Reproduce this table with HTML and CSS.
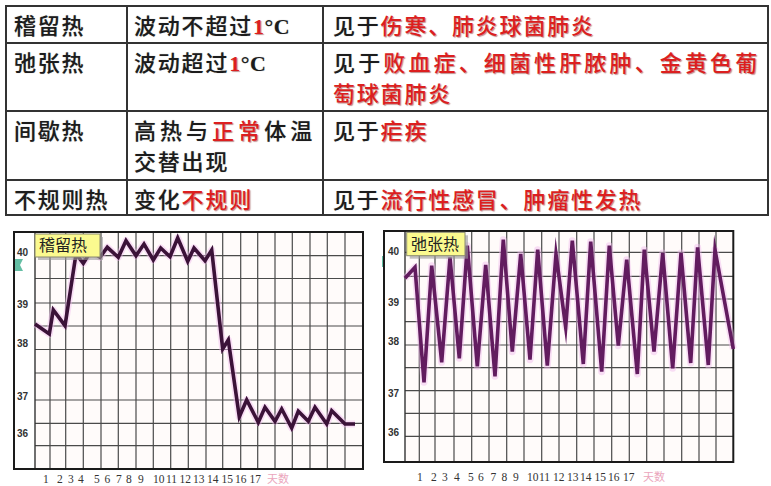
FILE: index.html
```html
<!DOCTYPE html>
<html lang="zh-CN">
  <head>
    <meta charset="UTF-8" />
    <meta name="viewport" content="width=device-width, initial-scale=1.0" />
    <link rel="stylesheet" href="styles.css">
    <title>热型</title>
  </head>
  <body>
    <table class="fever">
      <colgroup>
        <col class="c-name">
        <col class="c-range">
        <col class="c-seen">
      </colgroup>
      <tr class="r1">
        <td class="name">稽留热</td>
        <td class="range">波动不超过<span class="num"><b class="red">1</b>°C</span></td>
        <td class="seen">见于<span class="red">伤寒、肺炎球菌肺炎</span></td>
      </tr>
      <tr class="r2">
        <td class="name">弛张热</td>
        <td class="range">波动超过<span class="num"><b class="red">1</b>°C</span></td>
        <td class="seen">见于<span class="red">败血症、细菌性肝脓肿、金黄色葡萄球菌肺炎</span></td>
      </tr>
      <tr class="r3">
        <td class="name">间歇热</td>
        <td class="range">高热与<span class="red">正常</span>体温交替出现</td>
        <td class="seen">见于<span class="red">疟疾</span></td>
      </tr>
      <tr class="r4">
        <td class="name">不规则热</td>
        <td class="range">变化<span class="red">不规则</span></td>
        <td class="seen">见于<span class="red">流行性感冒、肿瘤性发热</span></td>
      </tr>
    </table>

    <div class="charts">
      <!-- 稽留热 -->
      <svg class="chart left" width="380" height="271" viewBox="0 0 380 271">
        <polygon class="tab" points="13,40 23,40 20,46 23,52 13,52" />
        <rect class="plot" x="35" y="13" width="328" height="237" />
        <g class="grid">
          <line x1="50" y1="13" x2="50" y2="250" />
          <line x1="65.7" y1="13" x2="65.7" y2="250" />
          <line x1="83.3" y1="13" x2="83.3" y2="250" />
          <line x1="101" y1="13" x2="101" y2="250" />
          <line x1="118.3" y1="13" x2="118.3" y2="250" />
          <line x1="136" y1="13" x2="136" y2="250" />
          <line x1="153.3" y1="13" x2="153.3" y2="250" />
          <line x1="170.7" y1="13" x2="170.7" y2="250" />
          <line x1="188.3" y1="13" x2="188.3" y2="250" />
          <line x1="206" y1="13" x2="206" y2="250" />
          <line x1="222.7" y1="13" x2="222.7" y2="250" />
          <line x1="240.7" y1="13" x2="240.7" y2="250" />
          <line x1="257.7" y1="13" x2="257.7" y2="250" />
          <line x1="275" y1="13" x2="275" y2="250" />
          <line x1="292.3" y1="13" x2="292.3" y2="250" />
          <line x1="310" y1="13" x2="310" y2="250" />
          <line x1="327.3" y1="13" x2="327.3" y2="250" />
          <line x1="345" y1="13" x2="345" y2="250" />
          <line x1="35" y1="36.7" x2="363" y2="36.7" />
          <line x1="35" y1="59.5" x2="363" y2="59.5" />
          <line x1="35" y1="84" x2="363" y2="84" />
          <line x1="35" y1="107" x2="363" y2="107" />
          <line x1="35" y1="130.5" x2="363" y2="130.5" />
          <line x1="35" y1="154" x2="363" y2="154" />
          <line x1="35" y1="181" x2="363" y2="181" />
          <line x1="35" y1="204.3" x2="363" y2="204.3" />
          <line x1="35" y1="226.7" x2="363" y2="226.7" />
        </g>
        <line class="axis" x1="35" y1="13" x2="35" y2="250" />
        <rect class="frame" x="14" y="13" width="349" height="237" />
        <g class="ylabels">
          <text x="17" y="37">40</text>
          <text x="17" y="89">39</text>
          <text x="17" y="128">38</text>
          <text x="17" y="181">37</text>
          <text x="17" y="218">36</text>
        </g>
        <polyline class="glow" points="35,105 49.3,115 53.3,91 65,106.7 76,35 83.3,44.3 91,32 100,38.3 107.3,28.3 118.3,38.3 126,21.7 136,36.7 144,25 153.3,41 160.7,29 170,37.7 177.7,19 187.7,42.3 194,29 205,41.7 211.7,31 222.7,130 228.3,121 239.3,197.7 246.7,181 258.3,203.3 265,188.3 275,202.3 281.7,190 291.7,209 298.3,192.3 308.3,202.3 315,188.3 326.7,205 331.7,191.7 345,205 355,205" />
        <polyline class="temp" points="35,105 49.3,115 53.3,91 65,106.7 76,35 83.3,44.3 91,32 100,38.3 107.3,28.3 118.3,38.3 126,21.7 136,36.7 144,25 153.3,41 160.7,29 170,37.7 177.7,19 187.7,42.3 194,29 205,41.7 211.7,31 222.7,130 228.3,121 239.3,197.7 246.7,181 258.3,203.3 265,188.3 275,202.3 281.7,190 291.7,209 298.3,192.3 308.3,202.3 315,188.3 326.7,205 331.7,191.7 345,205 355,205" />
        <rect class="tag-shadow" x="38" y="18" width="65" height="23" />
        <rect class="tag" x="35" y="15" width="65" height="23" />
        <text class="tag-text" x="39" y="32">稽留热</text>
        <g class="xlabels">
          <text x="43" y="264">1</text>
          <text x="57" y="264">2</text>
          <text x="68" y="264">3</text>
          <text x="78" y="264">4</text>
          <text x="94" y="264">5</text>
          <text x="104.5" y="264">6</text>
          <text x="116" y="264">7</text>
          <text x="126" y="264">8</text>
          <text x="138" y="264">9</text>
          <text x="153" y="264">10</text>
          <text x="166" y="264">11</text>
          <text x="179.5" y="264">12</text>
          <text x="193" y="264">13</text>
          <text x="207" y="264">14</text>
          <text x="221.5" y="264">15</text>
          <text x="235" y="264">16</text>
          <text x="249.5" y="264">17</text>
          <text class="days" x="267" y="264">天数</text>
        </g>
      </svg>

      <!-- 弛张热 -->
      <svg class="chart right" width="391" height="271" viewBox="0 0 391 271">
        <polygon class="tab" points="2,37 4,37 4,48 2,48" />
        <rect class="plot" x="25" y="12" width="328.3" height="231" />
        <g class="grid">
          <line x1="39.3" y1="12" x2="39.3" y2="243" />
          <line x1="55" y1="12" x2="55" y2="243" />
          <line x1="74" y1="12" x2="74" y2="243" />
          <line x1="91.7" y1="12" x2="91.7" y2="243" />
          <line x1="109" y1="12" x2="109" y2="243" />
          <line x1="126.7" y1="12" x2="126.7" y2="243" />
          <line x1="144" y1="12" x2="144" y2="243" />
          <line x1="161.7" y1="12" x2="161.7" y2="243" />
          <line x1="179" y1="12" x2="179" y2="243" />
          <line x1="196.7" y1="12" x2="196.7" y2="243" />
          <line x1="214" y1="12" x2="214" y2="243" />
          <line x1="231.7" y1="12" x2="231.7" y2="243" />
          <line x1="249.3" y1="12" x2="249.3" y2="243" />
          <line x1="266.7" y1="12" x2="266.7" y2="243" />
          <line x1="284" y1="12" x2="284" y2="243" />
          <line x1="301.7" y1="12" x2="301.7" y2="243" />
          <line x1="319" y1="12" x2="319" y2="243" />
          <line x1="336" y1="12" x2="336" y2="243" />
          <line x1="25" y1="33.3" x2="353.3" y2="33.3" />
          <line x1="25" y1="57.3" x2="353.3" y2="57.3" />
          <line x1="25" y1="80" x2="353.3" y2="80" />
          <line x1="25" y1="102.7" x2="353.3" y2="102.7" />
          <line x1="25" y1="126" x2="353.3" y2="126" />
          <line x1="25" y1="148.7" x2="353.3" y2="148.7" />
          <line x1="25" y1="171.7" x2="353.3" y2="171.7" />
          <line x1="25" y1="194.3" x2="353.3" y2="194.3" />
          <line x1="25" y1="217.3" x2="353.3" y2="217.3" />
        </g>
        <line class="axis" x1="25" y1="12" x2="25" y2="243" />
        <rect class="frame" x="4" y="12" width="349.3" height="231" />
        <g class="ylabels">
          <text x="8" y="36">40</text>
          <text x="8" y="87">39</text>
          <text x="8" y="126">38</text>
          <text x="8" y="178">37</text>
          <text x="8" y="217">36</text>
        </g>
        <polyline class="glow" points="25,59.3 35,48.3 44,163.3 51.7,46.7 61.7,143.3 70,38.3 79.3,139.3 87.3,26.7 97.3,147.3 105.7,46 115,157.3 123.3,20.7 132.3,132.7 140.7,35 150,140.7 157.7,30.7 167.3,146.7 176,35 185.7,108.3 192.3,21.7 203.3,145 210.7,22.7 221.7,152.7 229.3,26.7 238.3,126.7 246.7,40.7 257.3,155 264.3,30.7 274,132.7 282.7,34 292.7,149.3 301,34 310.7,144 317.6,28.3 328.3,146 335,30.7 353.3,130" />
        <polyline class="temp" points="25,59.3 35,48.3 44,163.3 51.7,46.7 61.7,143.3 70,38.3 79.3,139.3 87.3,26.7 97.3,147.3 105.7,46 115,157.3 123.3,20.7 132.3,132.7 140.7,35 150,140.7 157.7,30.7 167.3,146.7 176,35 185.7,108.3 192.3,21.7 203.3,145 210.7,22.7 221.7,152.7 229.3,26.7 238.3,126.7 246.7,40.7 257.3,155 264.3,30.7 274,132.7 282.7,34 292.7,149.3 301,34 310.7,144 317.6,28.3 328.3,146 335,30.7 353.3,130" />
        <rect class="tag-shadow" x="29.7" y="16.3" width="58.3" height="23.4" />
        <rect class="tag" x="26.7" y="13.3" width="58.3" height="23.4" />
        <text class="tag-text" x="31" y="30.5">弛张热</text>
        <g class="xlabels">
          <text x="37" y="262">1</text>
          <text x="51" y="262">2</text>
          <text x="62" y="262">3</text>
          <text x="74" y="262">4</text>
          <text x="88" y="262">5</text>
          <text x="98" y="262">6</text>
          <text x="110.5" y="262">7</text>
          <text x="121.5" y="262">8</text>
          <text x="133" y="262">9</text>
          <text x="147" y="262">10</text>
          <text x="159" y="262">11</text>
          <text x="173" y="262">12</text>
          <text x="187" y="262">13</text>
          <text x="200" y="262">14</text>
          <text x="214.5" y="262">15</text>
          <text x="228" y="262">16</text>
          <text x="243" y="262">17</text>
          <text class="days" x="263" y="262">天数</text>
        </g>
      </svg>
    </div>
  </body>
</html>
```

FILE: styles.css
```css
body {
  margin: 0;
  padding: 0;
  background-color: #fff;
  width: 771px;
  height: 486px;
  overflow: hidden;
  font-family: "Noto Sans CJK SC", sans-serif;
}

/* table on top */
.fever {
  border-collapse: collapse;
  table-layout: fixed;
  width: 762px;
  margin: 5px 0 0 5px;
  font-size: 22px;
  font-weight: 500;
  line-height: 31px;
  letter-spacing: 1.8px;
  color: #1c1c1c;
}

.fever .c-name {
  width: 121px;
}
.fever .c-range {
  width: 196px;
}
.fever .c-seen {
  width: 445px;
}

.fever td {
  border: 2px solid #333;
  vertical-align: top;
  padding: 2px 8px 0 6px;
  text-align: justify;
  text-shadow: 0 0 1px rgba(0, 0, 0, 0.35);
}

.fever td.name {
  padding-left: 7px;
}
.fever td.seen {
  padding-left: 9px;
  padding-right: 8px;
}

.fever .r1 { height: 35px; }
.fever .r2 { height: 68px; }
.fever .r3 { height: 69px; }
.fever .r4 { height: 35px; }

.fever .red {
  color: #dc1f1f;
  text-shadow: 1px 1px 1px rgba(110, 0, 0, 0.45);
}

.fever .num {
  font-family: "Liberation Serif", serif;
  font-weight: bold;
  letter-spacing: 0.5px;
}

/* charts below */
.charts {
  display: flex;
  margin-top: 3px;
}

.chart {
  display: block;
  flex-shrink: 0;
}

.chart .plot {
  fill: #fffbfa;
}

.chart .grid line {
  stroke: #4a4a4a;
  stroke-width: 1.2;
}

.chart .axis {
  stroke: #333;
  stroke-width: 1.4;
}

.chart .frame {
  fill: none;
  stroke: #1a1a1a;
  stroke-width: 2;
}

.chart .tab {
  fill: #64bea4;
}

.chart .ylabels text {
  font-family: "Liberation Sans", sans-serif;
  font-weight: bold;
  font-size: 10px;
  fill: #333;
}

.chart .glow {
  fill: none;
  stroke: #f0b8ee;
  stroke-width: 7;
  stroke-opacity: 0.45;
  stroke-linejoin: round;
}

.chart .temp {
  fill: none;
  stroke-width: 3.6;
  stroke-linejoin: miter;
  stroke-miterlimit: 10;
}

.left .temp {
  stroke: #3b1238;
}
.right .temp {
  stroke: #621c5f;
}

.chart .tag-shadow {
  fill: #9a9a9a;
  opacity: 0.6;
}

.chart .tag {
  fill: #fbfa8f;
  stroke: #8a8a70;
  stroke-width: 1;
}

.chart .tag-text {
  font-family: "Noto Sans CJK SC", sans-serif;
  font-size: 16px;
  fill: #222;
}

.chart .xlabels text {
  font-family: "Liberation Serif", serif;
  font-size: 11.5px;
  fill: #333;
}

.chart .xlabels .days {
  font-family: "Noto Sans CJK SC", serif;
  font-size: 11px;
  fill: #eba6bc;
}
```
